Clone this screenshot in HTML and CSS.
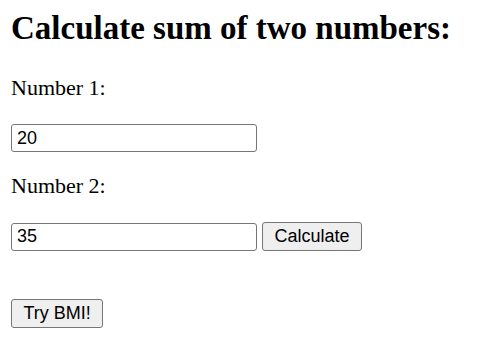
FILE: index.html
```html
<!DOCTYPE html>
<html>
<head>
<meta charset="utf-8">
<link rel="stylesheet" href="styles.css">
</head>
<body>
<div class="page">
  <h1 class="title">Calculate sum of two numbers:</h1>
  <p class="label">Number 1:</p>
  <div class="row first-input">
    <input class="field" type="text" value="20">
  </div>
  <p class="label second-label">Number 2:</p>
  <div class="row first-input">
    <input class="field" type="text" value="35">
    <button class="btn">Calculate</button>
  </div>
  <div class="row bmi-row">
    <button class="btn">Try BMI!</button>
  </div>
</div>
</body>
</html>
```

FILE: styles.css
```css
html, body {
  margin: 0;
  padding: 0;
  background: #ffffff;
}

.page {
  display: flex;
  flex-direction: column;
  align-items: flex-start;
  padding: 9px 0 0 11px;
  font-family: "Liberation Serif", "Times New Roman", serif;
  color: #000000;
}

.title {
  margin: 0;
  font-size: 33px;
  line-height: 38px;
  font-weight: bold;
}

.label {
  margin: 29px 0 0;
  font-size: 22px;
  line-height: 24px;
}

.second-label {
  margin-top: 22px;
}

.row {
  display: flex;
  align-items: center;
  gap: 5px;
}

.first-input {
  margin-top: 24px;
}

.bmi-row {
  margin-top: 48px;
}

.field {
  box-sizing: border-box;
  width: 246px;
  height: 28px;
  margin: 0;
  padding: 1px 5px;
  border: 1px solid #767676;
  border-radius: 3px;
  font-family: "Liberation Sans", Arial, sans-serif;
  font-size: 18px;
  color: #000000;
  background: #ffffff;
}

.btn {
  box-sizing: border-box;
  height: 29px;
  margin: 0;
  padding: 0 11.5px;
  border: 1px solid #767676;
  border-radius: 3px;
  background: #efefef;
  font-family: "Liberation Sans", Arial, sans-serif;
  font-size: 18px;
  color: #000000;
}
```
